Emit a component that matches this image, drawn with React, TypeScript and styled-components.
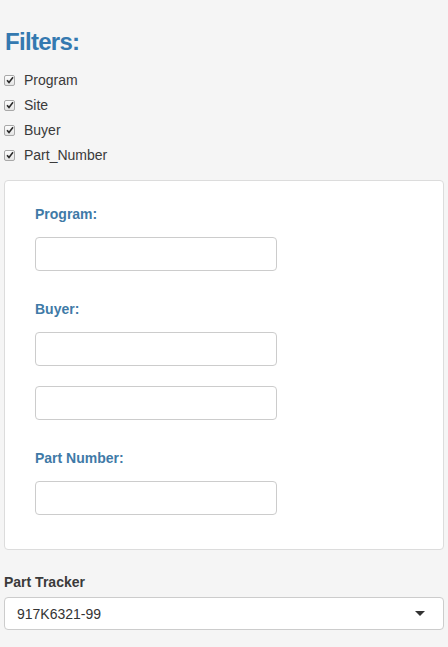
import React from 'react';
import styled, { createGlobalStyle } from 'styled-components';

const GlobalStyle = createGlobalStyle`
  html, body {
    margin: 0;
    padding: 0;
    background: #f5f5f5;
    font-family: "Liberation Sans", Arial, Helvetica, sans-serif;
    color: #333333;
  }
  * { box-sizing: border-box; }
`;

const Page = styled.div`
  padding: 0 4px 20px 4px;
  display: flex;
  flex-direction: column;
`;

const Title = styled.h3`
  margin: 29px 0 15px 1px;
  font-size: 24px;
  line-height: 26px;
  font-weight: bold;
  color: #3479b0;
  letter-spacing: -0.7px;
`;

const CheckList = styled.div`
  display: flex;
  flex-direction: column;
  gap: 5px;
`;

const CheckRow = styled.label`
  display: flex;
  align-items: center;
  height: 20px;
  font-size: 14px;
  line-height: 20px;
  color: #3a3a3a;
`;

const Box = styled.span`
  width: 11px;
  height: 11px;
  margin-right: 9px;
  border: 1px solid #a8a8a8;
  border-radius: 2px;
  background: linear-gradient(#fdfdfd, #e4e4e4);
  display: flex;
  align-items: center;
  justify-content: center;
`;

const Panel = styled.div`
  margin-top: 15px;
  background: #ffffff;
  border: 1px solid #dcdcdc;
  border-radius: 4px;
  padding: 23px 30px 34px 30px;
  display: flex;
  flex-direction: column;
`;

const Group = styled.div<{ $last?: boolean }>`
  display: flex;
  flex-direction: column;
  gap: 20px;
  margin-bottom: ${(p) => (p.$last ? '0' : '28px')};
`;

const FieldLabel = styled.div`
  font-size: 14px;
  line-height: 20px;
  font-weight: bold;
  color: #3f7aa7;
  margin-bottom: -7px;
`;

const TextInput = styled.input`
  width: 242px;
  height: 34px;
  border: 1px solid #cccccc;
  border-radius: 4px;
  background: #ffffff;
  padding: 6px 12px;
  font-size: 14px;
  font-family: inherit;
  outline: none;
`;

const TrackerLabel = styled.div`
  margin-top: 22px;
  margin-bottom: 5px;
  font-size: 14px;
  line-height: 20px;
  font-weight: bold;
  color: #3a3a3a;
`;

const Select = styled.div`
  position: relative;
  height: 33px;
  border: 1px solid #cccccc;
  border-radius: 4px;
  background: #ffffff;
  padding: 0 12px;
  display: flex;
  align-items: center;
  justify-content: space-between;
  font-size: 14px;
  color: #333333;
`;

const Caret = styled.span`
  width: 0;
  height: 0;
  margin-right: 6px;
  border-left: 5px solid transparent;
  border-right: 5px solid transparent;
  border-top: 5px solid #333333;
`;

const Check = () => (
  <svg width="8" height="8" viewBox="0 0 8 8">
    <path d="M1 4.2 L3 6.4 L7 1.2" fill="none" stroke="#2a2a2a" strokeWidth="1.6" />
  </svg>
);

const filters = ['Program', 'Site', 'Buyer', 'Part_Number'];

const App: React.FC = () => {
  return (
    <>
      <GlobalStyle />
      <Page>
        <Title>Filters:</Title>
        <CheckList>
          {filters.map((f) => (
            <CheckRow key={f}>
              <Box>
                <Check />
              </Box>
              {f}
            </CheckRow>
          ))}
        </CheckList>
        <Panel>
          <Group>
            <FieldLabel>Program:</FieldLabel>
            <TextInput />
          </Group>
          <Group>
            <FieldLabel>Buyer:</FieldLabel>
            <TextInput />
            <TextInput />
          </Group>
          <Group $last>
            <FieldLabel>Part Number:</FieldLabel>
            <TextInput />
          </Group>
        </Panel>
        <TrackerLabel>Part Tracker</TrackerLabel>
        <Select>
          <span>917K6321-99</span>
          <Caret />
        </Select>
      </Page>
    </>
  );
};

export default App;
